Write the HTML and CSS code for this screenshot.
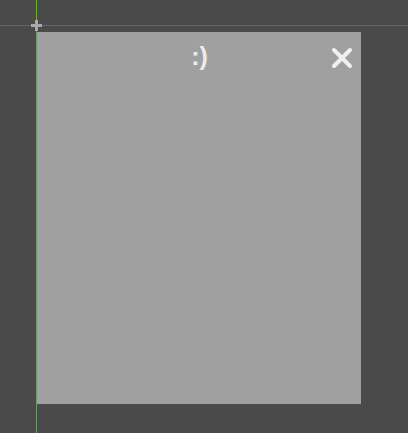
FILE: index.html
```html
<!DOCTYPE html>
<html lang="en">
<head>
    <meta charset="UTF-8">
    <title>Panel</title>
    <link rel="stylesheet" href="styles.css">
</head>
<body>
    <!-- Guide lines -->
    <div class="guide guide-x-left"></div>
    <div class="guide guide-x-right"></div>
    <div class="guide guide-y-top"></div>
    <div class="guide guide-y-bottom"></div>
    <div class="cross"></div>

    <div class="panel">
        <div class="panel-head">
            <span class="face">:)</span>
            <svg class="close" viewBox="0 0 22 22">
                <path d="M3 3 L19 19 M19 3 L3 19" />
            </svg>
        </div>
    </div>
</body>
</html>
```
FILE: styles.css
```css
* {
    margin: 0;
    padding: 0;
    box-sizing: border-box;
}
html, body {
    width: 100%;
    height: 100%;
    background: #4a4a4a;
    overflow: hidden;
    font-family: "Liberation Sans", Arial, sans-serif;
}
body {
    padding: 32px 0 0 37px;
}
/* Panel */
.panel {
    width: 324px;
    height: 372px;
    background: #a0a0a0;
}
.panel-head {
    position: relative;
    height: 52px;
    display: flex;
    justify-content: center;
    align-items: center;
}
.face {
    color: #ececec;
    font-size: 25px;
    font-weight: bold;
    margin-left: 1px;
    margin-top: -4px;
}
.close {
    position: absolute;
    right: 8px;
    top: 15px;
    width: 22px;
    height: 22px;
}
.close path {
    stroke: #f0f0f0;
    stroke-width: 4;
    stroke-linecap: round;
    fill: none;
}
/* Guides */
.guide {
    position: absolute;
}
.guide-x-left {
    left: 0;
    top: 25px;
    width: 32px;
    height: 1px;
    background: #a04a5a;
}
.guide-x-right {
    left: 41px;
    right: 0;
    top: 25px;
    height: 1px;
    background: #8c4a94;
}
.guide-y-top {
    left: 36px;
    top: 0;
    width: 1px;
    height: 21px;
    background: #6cb02c;
}
.guide-y-bottom {
    left: 36px;
    top: 30px;
    bottom: 0;
    width: 1px;
    background: #6a9a6a;
}
.cross {
    position: absolute;
    left: 31px;
    top: 20px;
    width: 11px;
    height: 11px;
    filter: blur(0.6px);
    background:
        linear-gradient(#a8a8a8, #a8a8a8) 4px 0 / 3px 11px no-repeat,
        linear-gradient(#a8a8a8, #a8a8a8) 0 4px / 11px 3px no-repeat;
}
```
